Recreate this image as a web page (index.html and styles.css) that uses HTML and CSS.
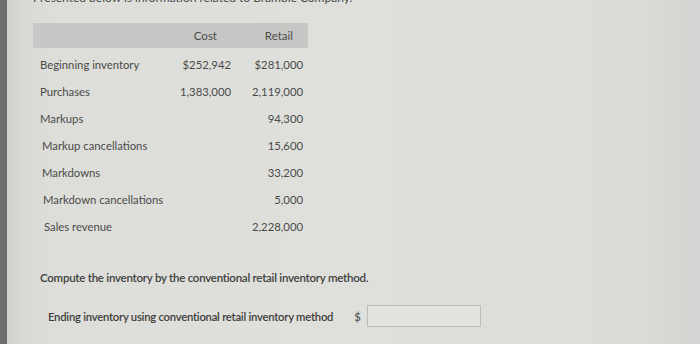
FILE: index.html
```html
<!DOCTYPE html>
<html>
<head>
<meta charset="utf-8">
<link rel="stylesheet" href="styles.css">
</head>
<body>
<div class="screen">
  <div class="edge"></div>
  <div class="shade"></div>
  <main class="content">
    <p class="intro">Presented below is information related to Bramble Company.</p>
    <div class="table">
      <div class="head">
        <span></span>
        <span class="hcost">Cost</span>
        <span class="hretail">Retail</span>
      </div>
      <div class="row"><span class="label">Beginning inventory</span><span class="num">$252,942</span><span class="num">$281,000</span></div>
      <div class="row"><span class="label">Purchases</span><span class="num">1,383,000</span><span class="num">2,119,000</span></div>
      <div class="row"><span class="label">Markups</span><span class="num"></span><span class="num">94,300</span></div>
      <div class="row"><span class="label l2">Markup cancellations</span><span class="num"></span><span class="num">15,600</span></div>
      <div class="row"><span class="label l2">Markdowns</span><span class="num"></span><span class="num">33,200</span></div>
      <div class="row"><span class="label l3">Markdown cancellations</span><span class="num"></span><span class="num">5,000</span></div>
      <div class="row"><span class="label l4">Sales revenue</span><span class="num"></span><span class="num">2,228,000</span></div>
    </div>
    <p class="task">Compute the inventory by the conventional retail inventory method.</p>
    <div class="answer">
      <span class="alabel">Ending inventory using conventional retail inventory method</span>
      <span class="dollar">$</span>
      <span class="box"></span>
    </div>
  </main>
</div>
</body>
</html>
```

FILE: styles.css
```css
html, body {
  margin: 0;
  padding: 0;
}
body {
  width: 700px;
  height: 344px;
  overflow: hidden;
  background: #dcddda;
  font-family: Lato, "Open Sans", sans-serif;
  color: #4a4a48;
}
.screen {
  display: flex;
  height: 344px;
  background: linear-gradient(90deg, #d6d7d4 0%, #dddeda 8%, #dfe0dc 50%, #dcddd9 90%, #d4d5d2 100%);
}
.edge {
  width: 7px;
  flex: none;
  background: #6e6e6c;
}
.shade {
  width: 18px;
  flex: none;
  background: linear-gradient(90deg, #cfd0cd, #dadbd7);
}
.content {
  flex: 1;
  padding-left: 8px;
}
.intro {
  margin: -9px 0 0 0;
  font-size: 12px;
  line-height: 14px;
  color: #4a4a48;
  white-space: nowrap;
}
.table {
  margin-top: 18px;
  width: 275px;
}
.head, .row {
  display: grid;
  grid-template-columns: minmax(0, 1fr) 80px 72px;
  align-items: center;
  padding: 0 5px 0 7px;
}
.head {
  height: 25px;
  background: #c7c8c5;
  font-size: 11.5px;
  color: #4c4c4a;
}
.hcost {
  text-align: right;
  padding-right: 14px;
}
.hretail {
  text-align: right;
  padding-right: 10px;
}
.head + .row {
  margin-top: 3px;
}
.row {
  height: 27px;
  font-size: 11.3px;
  white-space: nowrap;
}
.label {
  overflow: visible;
}
.label.l2 { padding-left: 2px; }
.label.l3 { padding-left: 3px; }
.label.l4 { padding-left: 4px; }
.num {
  text-align: right;
}
.task {
  margin: 31px 0 0 7px;
  font-size: 11.5px;
  font-weight: 600;
  color: #3e3e3c;
  letter-spacing: -0.25px;
  white-space: nowrap;
}
.answer {
  display: flex;
  align-items: center;
  margin: 21px 0 0 15px;
  font-size: 11.3px;
  font-weight: 600;
  color: #3e3e3c;
  letter-spacing: -0.25px;
  white-space: nowrap;
}
.dollar {
  margin-left: 21px;
  color: #555;
}
.box {
  margin-left: 6px;
  width: 112px;
  height: 20px;
  border: 1px solid #bcbdba;
  background: #e2e3df;
}
```
